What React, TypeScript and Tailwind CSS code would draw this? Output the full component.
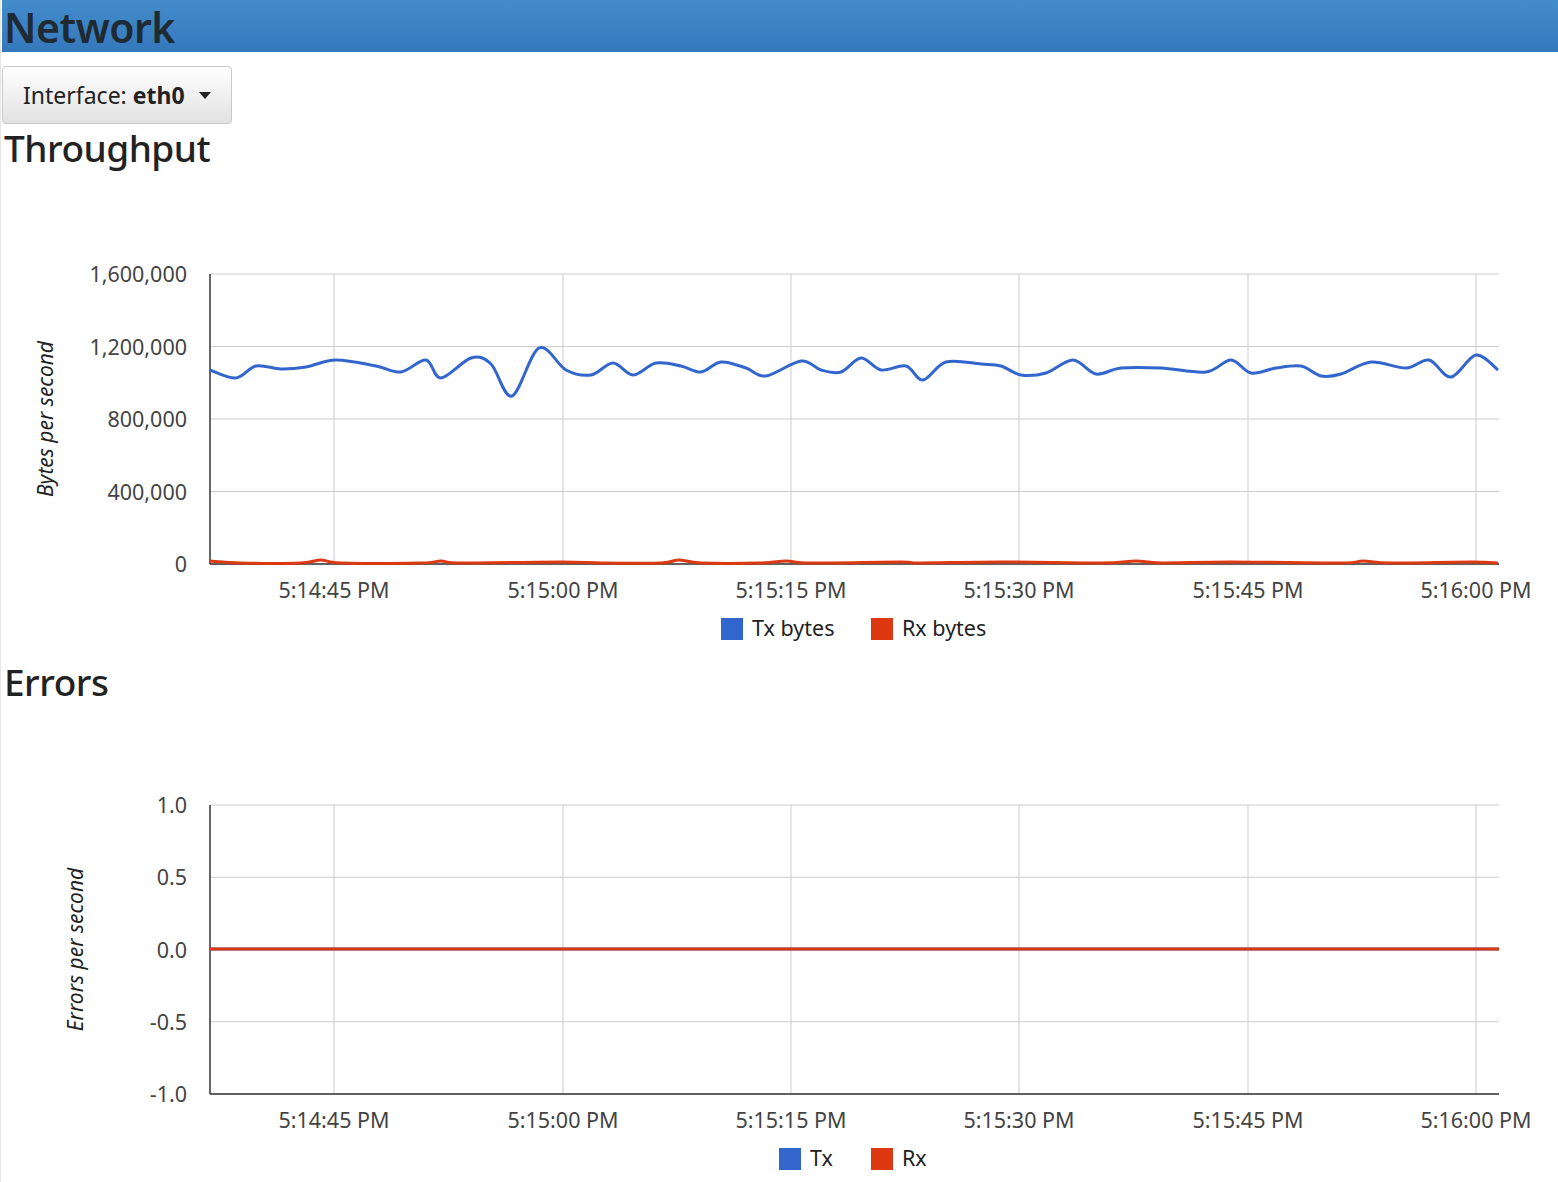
import React from "react";

const xs = [333, 562, 790, 1018, 1247, 1475];
const xl = ["5:14:45 PM", "5:15:00 PM", "5:15:15 PM", "5:15:30 PM", "5:15:45 PM", "5:16:00 PM"];

function smooth(pts: number[][]) {
  let d = `M${pts[0][0]},${pts[0][1]}`;
  for (let i = 0; i < pts.length - 1; i++) {
    const p0 = pts[i - 1] || pts[i], p1 = pts[i], p2 = pts[i + 1], p3 = pts[i + 2] || p2;
    const c1 = [p1[0] + (p2[0] - p0[0]) / 6, p1[1] + (p2[1] - p0[1]) / 6];
    const c2 = [p2[0] - (p3[0] - p1[0]) / 6, p2[1] - (p3[1] - p1[1]) / 6];
    d += ` C${c1[0]},${c1[1]} ${c2[0]},${c2[1]} ${p2[0]},${p2[1]}`;
  }
  return d;
}

const tx = [[209,370],[235,378],[255,366],[280,369],[305,367],[335,360],[375,366],[400,372],[425,360],[440,378],[470,358],[490,364],[511,396],[538,348],[565,370],[590,375],[612,363],[632,375],[655,363],[680,366],[700,372],[720,362],[745,368],[765,376],[800,361],[820,370],[840,372],[860,358],[880,370],[905,366],[922,380],[945,362],[980,364],[1000,366],[1020,375],[1045,373],[1072,360],[1095,374],[1120,368],[1160,368],[1205,372],[1230,360],[1250,373],[1275,368],[1300,366],[1320,376],[1340,374],[1370,362],[1405,368],[1428,360],[1450,377],[1475,355],[1497,370]];
const rx = [[209,561],[240,563],[300,563],[320,560],[340,563],[420,563],[440,561],[460,563],[560,562],[600,563],[660,563],[678,560],[700,563],[760,563],[785,561],[810,563],[900,562],[920,563],[1000,562],[1100,563],[1135,561],[1160,563],[1230,562],[1340,563],[1362,561],[1390,563],[1470,562],[1497,563]];

function Chart({ top, h, plotTop, plotBot, yl, ylabel, ylx, legend, lx, children }: any) {
  const n = yl.length;
  return (
    <svg width="1558" height={h} viewBox={`0 ${top} 1558 ${h}`} className="block font-['Arial','Liberation_Sans',sans-serif]">
      {yl.map((t: string, i: number) => {
        const y = plotTop + ((plotBot - plotTop) * i) / (n - 1);
        return (
          <g key={i}>
            <line x1="209" x2="1498" y1={y} y2={y} stroke="#cccccc" strokeWidth="1" />
            <text x="186" y={y + 8} textAnchor="end" fontSize="21.5" fill="#444">{t}</text>
          </g>
        );
      })}
      {xs.map((x, i) => (
        <g key={i}>
          <line x1={x} x2={x} y1={plotTop} y2={plotBot} stroke="#cccccc" />
          <text x={x} y={plotBot + 34} textAnchor="middle" fontSize="21.5" fill="#444">{xl[i]}</text>
        </g>
      ))}
      <line x1="209" x2="209" y1={plotTop} y2={plotBot} stroke="#333" strokeWidth="1.5" />
      <text transform={`translate(${ylx},${(plotTop + plotBot) / 2}) rotate(-90)`} textAnchor="middle" fontSize="21" fontStyle="italic" fill="#222">{ylabel}</text>
      {children}
      <rect x={lx[0]} y={plotBot + 54} width="22" height="22" fill="#3366cc" />
      <text x={lx[0] + 31} y={plotBot + 72} fontSize="21.5" fill="#222">{legend[0]}</text>
      <rect x={lx[1]} y={plotBot + 54} width="22" height="22" fill="#dc3912" />
      <text x={lx[1] + 31} y={plotBot + 72} fontSize="21.5" fill="#222">{legend[1]}</text>
    </svg>
  );
}

export default function App() {
  return (
    <div className="w-[1558px] h-[1182px] bg-white overflow-hidden border-l border-[#e5e5e5] font-['Open_Sans','Noto_Sans',sans-serif]">
      <div className="h-[52px] ml-[1px] bg-gradient-to-b from-[#438ccb] to-[#3478bb] flex items-end">
        <div className="text-[41px] leading-[50px] font-semibold text-[#1f2a33] pl-[2px] tracking-[-0.5px]">Network</div>
      </div>
      <div className="mt-[14px] ml-[1px] w-[230px] h-[58px] rounded border border-[#c8c8c8] bg-gradient-to-b from-white to-[#e2e2e2] flex items-center pl-[20px] text-[23px] text-[#222]">
        Interface:&nbsp;<b>eth0</b>
        <span className="ml-[14px] w-0 h-0 border-l-[6px] border-r-[6px] border-t-[7px] border-l-transparent border-r-transparent border-t-[#222]" />
      </div>
      <div className="text-[37px] leading-[48px] font-medium text-[#222] pl-[3px] tracking-[-0.5px]">Throughput</div>
      <Chart top={172} h={490} plotTop={274} plotBot={564} yl={["1,600,000","1,200,000","800,000","400,000","0"]} ylabel="Bytes per second" ylx={52} legend={["Tx bytes","Rx bytes"]} lx={[720,870]}>
        <line x1="209" x2="1498" y1="564" y2="564" stroke="#333" strokeWidth="1.5" />
        <path d={smooth(rx)} fill="none" stroke="#dc3912" strokeWidth="3" />
        <path d={smooth(tx)} fill="none" stroke="#3366cc" strokeWidth="3" />
      </Chart>
      <div className="text-[37px] leading-[40px] font-medium text-[#222] pl-[3px] tracking-[-0.5px]">Errors</div>
      <Chart top={702} h={480} plotTop={805} plotBot={1094} yl={["1.0","0.5","0.0","-0.5","-1.0"]} ylabel="Errors per second" ylx={82} legend={["Tx","Rx"]} lx={[778,870]}>
        <line x1="209" x2="1498" y1="1094" y2="1094" stroke="#333" strokeWidth="1.5" />
        <line x1="209" x2="1498" y1="949" y2="949" stroke="#3366cc" strokeWidth="3" />
        <line x1="209" x2="1498" y1="949" y2="949" stroke="#dc3912" strokeWidth="3" />
      </Chart>
    </div>
  );
}
